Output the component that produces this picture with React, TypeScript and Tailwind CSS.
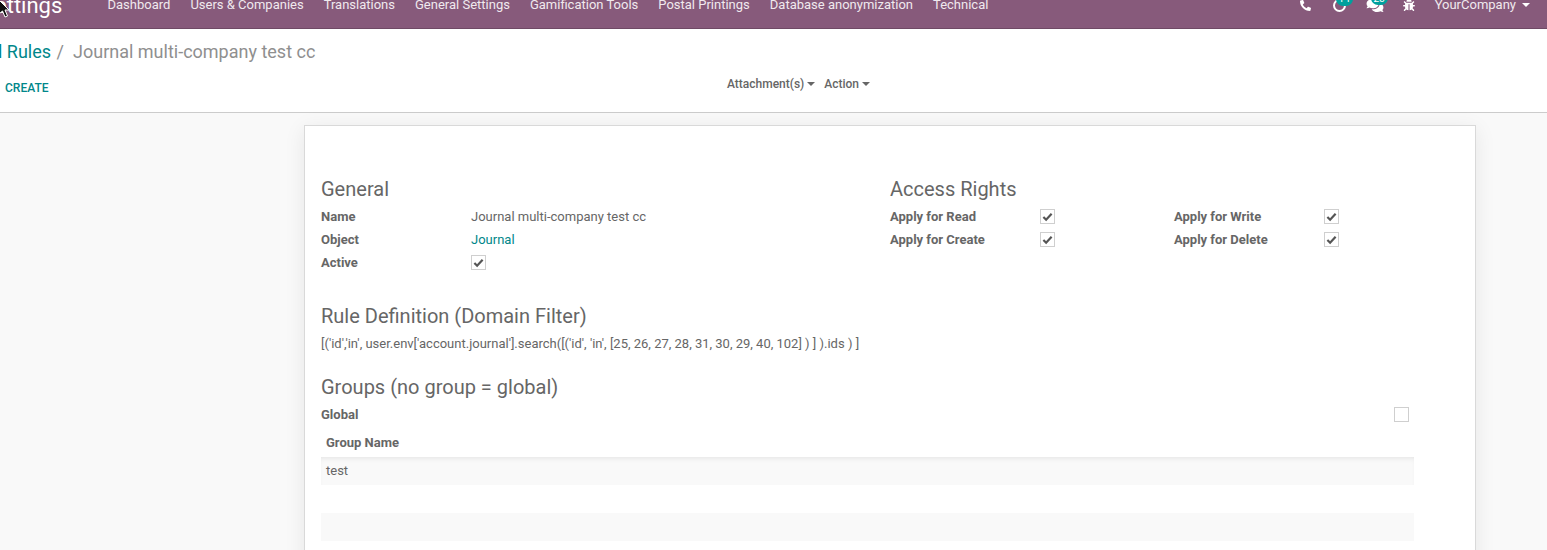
import { FaPhone, FaComments, FaBug } from "react-icons/fa"

const menu = [
  "Dashboard",
  "Users & Companies",
  "Translations",
  "General Settings",
  "Gamification Tools",
  "Postal Printings",
  "Database anonymization",
  "Technical",
]

function Check({ on = true }: { on?: boolean }) {
  return (
    <span className="flex h-[15px] w-[15px] items-center justify-center border border-[#cfcfcf] bg-white">
      {on && (
        <svg viewBox="0 0 12 12" className="h-[11px] w-[11px]">
          <path d="M1.5 6.5 L4.5 9.5 L10.5 3" fill="none" stroke="#555" strokeWidth="2.4" />
        </svg>
      )}
    </span>
  )
}

function Caret({ className }: { className: string }) {
  return <span className={`ml-[3px] inline-block h-0 w-0 border-x-4 border-t-4 border-x-transparent ${className}`} />
}

function Field({ label, width, children }: { label: string; width: string; children: React.ReactNode }) {
  return (
    <div className="flex h-[23px] items-center">
      <span className={`${width} shrink-0 font-bold`}>{label}</span>
      {children}
    </div>
  )
}

function Badge({ value, className }: { value: number; className: string }) {
  return (
    <span className={`absolute flex h-[14px] min-w-[17px] items-center justify-center rounded-full bg-[#00a09d] text-[10px] text-white ${className}`}>
      {value}
    </span>
  )
}

export default function App() {
  return (
    <div className="relative h-[550px] w-full overflow-hidden bg-[#f9f9f9] font-['Roboto',sans-serif] text-[13px] text-[#666666]">
      <nav className="-mt-[18px] flex h-[47px] items-center border-b border-[#6f4a65] bg-[#875a7b] text-[#f0e9ee]">
        <span className="-ml-[18px] w-[125.5px] shrink-0 text-[22px] text-white">Settings</span>
        <ul className="flex gap-5">
          {menu.map((item) => (
            <li key={item}>{item}</li>
          ))}
        </ul>
        <div className="ml-auto flex items-center">
          <FaPhone className="h-[11px] w-[11px] -scale-x-100 text-white" />
          <span className="relative ml-[22px] h-[13px] w-[14px]">
            <span className="block h-[13px] w-[13px] rounded-full border-2 border-white" />
            <Badge value={14} className="-top-[7px] left-[3px]" />
          </span>
          <span className="relative ml-[19px] h-[14px] w-[19px]">
            <FaComments className="h-[15px] w-[18px] text-white" />
            <Badge value={23} className="-top-[7px] left-[5px]" />
          </span>
          <FaBug className="ml-[18px] h-[12px] w-[12px] text-white" />
          <span className="ml-[20px]">YourCompany</span>
          <Caret className="ml-[6px] mr-[17px] border-t-white" />
        </div>
      </nav>

      <header className="h-[84px] border-b border-[#cccccc] bg-white">
        <div className="flex h-[45px] items-center text-[18px]">
          <a className="-ml-[2px] text-[#00878a]">l Rules</a>
          <span className="ml-[5.5px] text-[#8f8f8f]">/</span>
          <span className="ml-[9px] text-[#8f8f8f]">Journal multi-company test cc</span>
        </div>
        <div className="relative flex h-[22px] items-center justify-center pb-[2px] text-[12px] font-medium">
          <span className="absolute left-[5px] top-[5px] font-medium text-[#00878a]">CREATE</span>
          <div className="flex items-center pl-[50px]">
            <span>Attachment(s)</span>
            <Caret className="border-t-[#666666]" />
            <span className="ml-[9px]">Action</span>
            <Caret className="border-t-[#666666]" />
          </div>
        </div>
      </header>

      <main className="ml-[304px] mt-[12px] w-[1172px] border border-[#d9d9d9] bg-white pl-[16px] pr-[61px] pt-[51px] shadow-[0_4px_20px_rgba(0,0,0,0.08)]">
        <div className="flex">
          <section className="w-[569px]">
            <h2 className="mb-[4px] text-[20px] leading-[24px]">General</h2>
            <Field label="Name" width="w-[150px]">
              <span>Journal multi-company test cc</span>
            </Field>
            <Field label="Object" width="w-[150px]">
              <span className="text-[#00878a]">Journal</span>
            </Field>
            <Field label="Active" width="w-[150px]">
              <Check />
            </Field>
          </section>
          <section className="flex-1">
            <h2 className="mb-[4px] text-[20px] leading-[24px]">Access Rights</h2>
            <div className="grid grid-cols-[284px_1fr]">
              <Field label="Apply for Read" width="w-[150px]">
                <Check />
              </Field>
              <Field label="Apply for Write" width="w-[150px]">
                <Check />
              </Field>
              <Field label="Apply for Create" width="w-[150px]">
                <Check />
              </Field>
              <Field label="Apply for Delete" width="w-[150px]">
                <Check />
              </Field>
            </div>
          </section>
        </div>

        <h2 className="mt-[30px] text-[20px] leading-[24px]">Rule Definition (Domain Filter)</h2>
        <p className="mt-[7px] leading-[18px]">
          [('id','in', user.env['account.journal'].search([('id', 'in', [25, 26, 27, 28, 31, 30, 29, 40, 102] ) ] ).ids ) ]
        </p>

        <h2 className="mt-[22px] text-[20px] leading-[24px]">Groups (no group = global)</h2>
        <div className="mt-[4px] flex h-[23px] items-center justify-between pr-[5px] font-bold">
          <span>Global</span>
          <Check on={false} />
        </div>

        <table className="mt-[3px] w-full">
          <thead>
            <tr>
              <th className="h-[28px] px-[5px] text-left font-bold">Group Name</th>
            </tr>
          </thead>
          <tbody>
            <tr>
              <td className="h-[28px] bg-[#f9f9f9] px-[5px] shadow-[inset_0_4px_6px_-4px_rgba(0,0,0,0.12)]">test</td>
            </tr>
            <tr>
              <td className="h-[28px]" />
            </tr>
            <tr>
              <td className="h-[28px] bg-[#f9f9f9]" />
            </tr>
            <tr>
              <td className="h-[28px]" />
            </tr>
          </tbody>
        </table>
      </main>

      <svg viewBox="0 0 12 20" className="absolute -left-[2px] -top-[1px] h-[20px] w-[12px]">
        <path d="M1 1 L1 15 L4.5 12 L7 18 L9.5 17 L7 11 L11 11 Z" fill="#111" stroke="#fff" strokeWidth="1" />
      </svg>
    </div>
  )
}
